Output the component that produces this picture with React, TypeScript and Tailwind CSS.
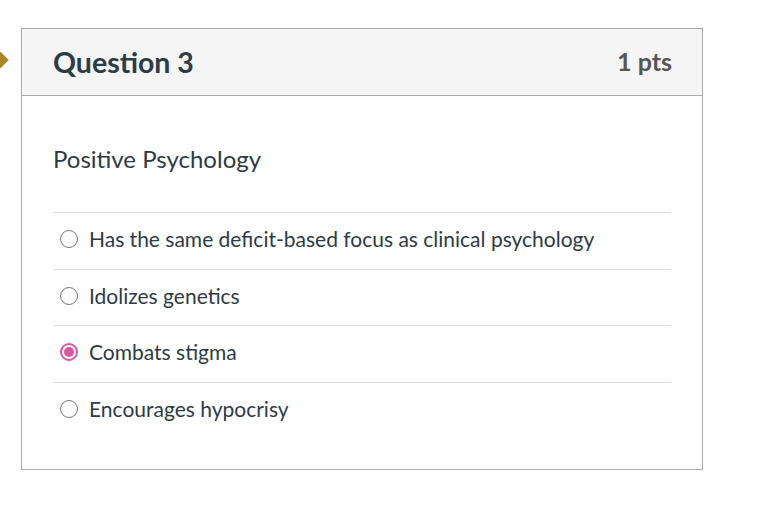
import { useState } from "react";

const answers = [
  "Has the same deficit-based focus as clinical psychology",
  "Idolizes genetics",
  "Combats stigma",
  "Encourages hypocrisy",
];

function Radio({ checked }: { checked: boolean }) {
  return checked ? (
    <span className="flex h-[18px] w-[18px] shrink-0 items-center justify-center rounded-full border-2 border-[#e0569a] bg-white">
      <span className="h-[10px] w-[10px] rounded-full bg-[#e0569a]" />
    </span>
  ) : (
    <span className="h-[18px] w-[18px] shrink-0 rounded-full border-[1.5px] border-[#777] bg-white" />
  );
}

export default function App() {
  const [selected, setSelected] = useState(2);

  return (
    <div
      className="relative min-h-[506px] w-[758px] overflow-hidden bg-white pl-[21px] pt-[28px]"
      style={{ fontFamily: "Lato, 'Open Sans', sans-serif" }}
    >
      {/* flag marker */}
      <span className="absolute left-[-13px] top-[51px] h-[18px] w-[18px] rotate-45 bg-[#a8862a]" />

      <div className="w-[682px] border border-[#aaa]">
        <div className="flex h-[67px] items-center justify-between border-b border-[#aaa] bg-[#f5f5f5] pl-[31px] pr-[30px]">
          <h2 className="text-[28.5px] font-bold text-[#2d3b45]">Question 3</h2>
          <span className="text-[25px] font-bold text-[#555]">1 pts</span>
        </div>

        <div className="px-[31px] pb-[31px] pt-[46px]">
          <p className="mb-[36px] text-[24px] leading-[34px] text-[#2d3b45]">Positive Psychology</p>

          <div>
            {answers.map((a, i) => (
              <label
                key={a}
                onClick={() => setSelected(i)}
                className="flex h-[56.5px] cursor-pointer items-center gap-[11px] border-t border-[#ddd] pb-[3px] pl-[7px] text-[21px] text-[#2d3b45]"
              >
                <Radio checked={selected === i} />
                <span className="-mt-[1px]">{a}</span>
              </label>
            ))}
          </div>
        </div>
      </div>
    </div>
  );
}
